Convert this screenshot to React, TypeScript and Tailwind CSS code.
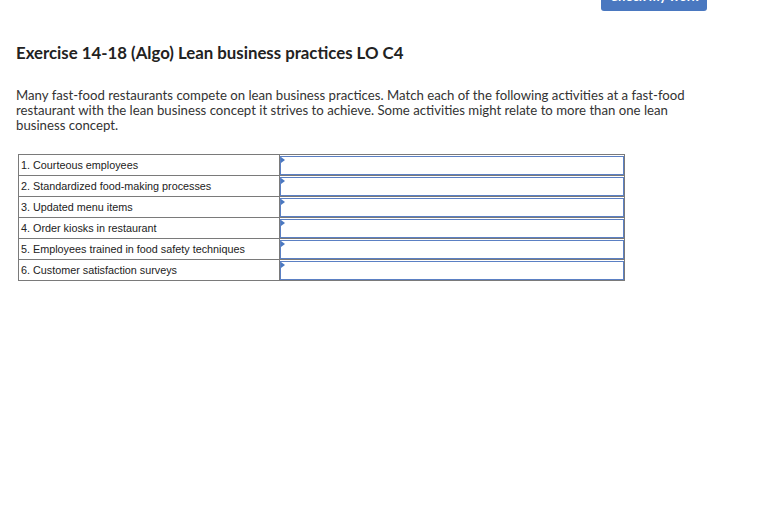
import React from 'react';

const activities = [
  '1. Courteous employees',
  '2. Standardized food-making processes',
  '3. Updated menu items',
  '4. Order kiosks in restaurant',
  '5. Employees trained in food safety techniques',
  '6. Customer satisfaction surveys',
];

const App: React.FC = () => {
  return (
    <div className="min-h-screen w-full bg-white" style={{ fontFamily: 'Lato, "Open Sans", sans-serif' }}>
      <div className="flex justify-end pr-[52px]">
        <button className="-mt-[17px] h-[28px] w-[106px] rounded-[3px] bg-[#4a78c0] text-[13px] font-bold text-white">
          Check my work
        </button>
      </div>

      <div className="px-4 pt-[32px]">
        <h1 className="text-[16.8px] font-bold leading-[20px] text-[#222]">
          Exercise 14-18 (Algo) Lean business practices LO C4
        </h1>

        <p className="mt-[25px] w-[700px] text-[13.2px] leading-[15px] text-[#333]">
          Many fast-food restaurants compete on lean business practices. Match each of the following activities at a fast-food
          restaurant with the lean business concept it strives to achieve. Some activities might relate to more than one lean
          business concept.
        </p>

        <table
          className="ml-[2px] mt-[21px] w-[607px] border-collapse text-[10.8px] text-[#222]"
          style={{ fontFamily: '"Liberation Sans", Arial, sans-serif' }}
        >
          <tbody>
            {activities.map((a) => (
              <tr key={a} className="h-[21px]">
                <td className="w-[261px] border border-[#7a7a7a] px-[2px] py-0 align-middle leading-[19px]">{a}</td>
                <td className="border border-[#7a7a7a] p-0">
                  <div className="relative h-[19px] border border-[#5b80c4]">
                    <span className="absolute left-0 top-0 h-0 w-0 border-y-[3px] border-l-[4px] border-y-transparent border-l-[#4a78c0]" />
                  </div>
                </td>
              </tr>
            ))}
          </tbody>
        </table>
      </div>
    </div>
  );
};

export default App;
